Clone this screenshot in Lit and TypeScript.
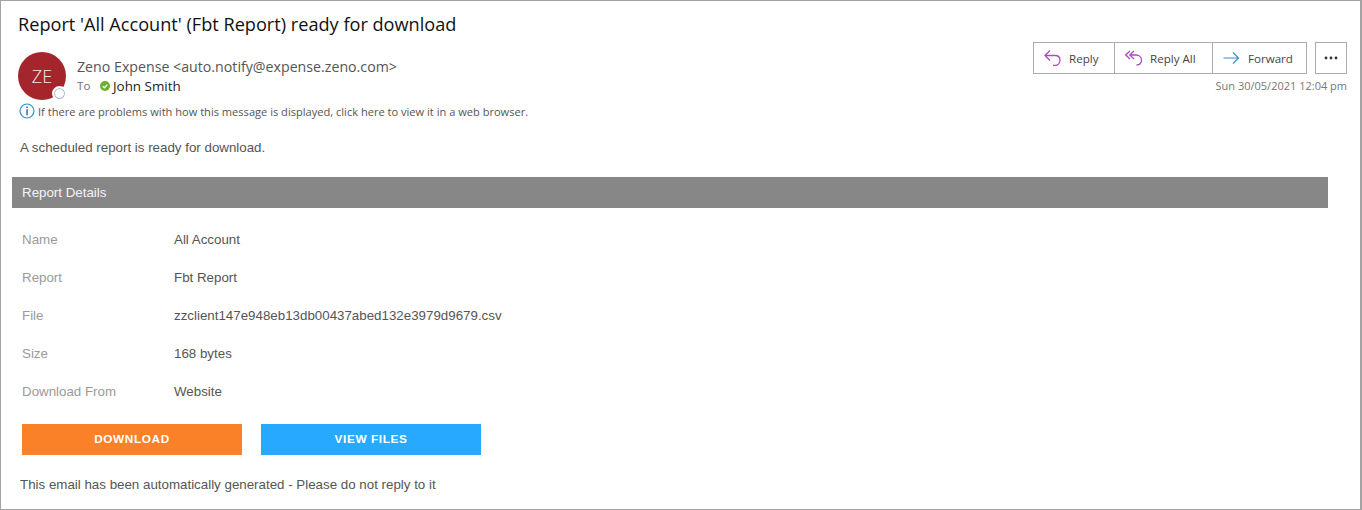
import { LitElement, html, css } from "lit";
import { customElement } from "lit/decorators.js";

const details = [
  ["Name", "All Account"],
  ["Report", "Fbt Report"],
  ["File", "zzclient147e948eb13db00437abed132e3979d9679.csv"],
  ["Size", "168 bytes"],
  ["Download From", "Website"],
];

@customElement("app-root")
class AppRoot extends LitElement {
  static styles = css`
    :host {
      display: block;
      width: 1362px;
      height: 510px;
      overflow: hidden;
      background: #fff;
    }
    .frame {
      box-sizing: border-box;
      height: 510px;
      border: 1px solid #a3a3a3;
      border-right-width: 2px;
      font-family: "Open Sans", "Noto Sans", sans-serif;
      color: #444;
      display: flex;
      flex-direction: column;
    }
    .subject {
      margin: 11px 0 0 17px;
      font-size: 18.15px;
      line-height: 24px;
      color: #111;
    }
    .head {
      display: flex;
      justify-content: space-between;
      height: 54px;
      margin-top: 16px;
      padding: 0 13px 0 17px;
    }
    .sender {
      display: flex;
      gap: 11px;
    }
    .avatar {
      position: relative;
      box-sizing: border-box;
      width: 48px;
      height: 48px;
      border-radius: 50%;
      background: #a4262c;
      color: #f5e6e6;
      font-size: 18px;
      font-weight: 300;
      line-height: 48px;
      text-align: center;
    }
    .presence {
      position: absolute;
      right: -1px;
      bottom: -1px;
      box-sizing: border-box;
      width: 15px;
      height: 15px;
      border-radius: 50%;
      background: #fff;
      border: 2px solid #fff;
      box-shadow: inset 0 0 0 1px #9fb6c6;
    }
    .from {
      font-size: 14.2px;
      line-height: 20px;
      margin-top: 5px;
      color: #555;
    }
    .to {
      display: flex;
      align-items: center;
      font-size: 13.4px;
      line-height: 18px;
      color: #222;
    }
    .to .label {
      color: #6f6f6f;
      font-size: 11.6px;
      width: 23px;
    }
    .to svg {
      margin-right: 3px;
    }
    .actions {
      display: flex;
      flex-direction: column;
      align-items: flex-end;
      margin-top: -10px;
    }
    .btns {
      display: flex;
      gap: 8px;
    }
    .group {
      box-sizing: border-box;
      display: flex;
      height: 32px;
      border: 1px solid #ababab;
    }
    .group button {
      display: flex;
      align-items: center;
      box-sizing: border-box;
      height: 30px;
      border: 0;
      border-left: 1px solid #ababab;
      background: #fff;
      padding: 0 0 0 10px;
      font: 11.6px "Open Sans", "Noto Sans", sans-serif;
      color: #444;
      gap: 8px;
    }
    .group button:first-child {
      border-left: 0;
    }
    .more {
      box-sizing: border-box;
      width: 32px;
      height: 32px;
      border: 1px solid #ababab;
      background: #fff;
      padding: 0;
      display: flex;
      align-items: center;
      justify-content: center;
    }
    .date {
      margin-top: 4px;
      font-size: 11px;
      line-height: 16px;
      color: #777;
    }
    .notice {
      display: flex;
      align-items: center;
      gap: 3px;
      height: 18px;
      margin: -4px 0 0 18px;
      font-size: 11.08px;
      color: #555;
    }
    .body {
      font-family: "Liberation Sans", Arial, sans-serif;
      font-size: 13.33px;
      color: #555;
    }
    .intro {
      margin: 20px 0 0 19px;
      line-height: 16px;
    }
    .bar {
      box-sizing: border-box;
      width: 1316px;
      height: 31px;
      margin: 21px 0 0 11px;
      padding-left: 10px;
      background: #878787;
      color: #f4f4f4;
      line-height: 31px;
    }
    .rows {
      margin: 13px 0 0 21px;
    }
    .row {
      display: grid;
      grid-template-columns: 152px 1fr;
      height: 38px;
      line-height: 38px;
    }
    .row .key {
      color: #9a9a9a;
    }
    .row .val {
      color: #555;
    }
    .cta {
      display: flex;
      gap: 19px;
      margin: 13px 0 0 21px;
    }
    .cta a {
      width: 220px;
      height: 31px;
      line-height: 30px;
      text-align: center;
      color: #fff;
      font-weight: 700;
      letter-spacing: 0.6px;
      font-size: 11.8px;
    }
    .cta .dl {
      background: #fb8128;
    }
    .cta .vf {
      background: #26a9ff;
    }
    .foot {
      margin: 22px 0 0 19px;
      line-height: 16px;
    }
  `;

  render() {
    return html`
      <div class="frame">
        <div class="subject">Report 'All Account' (Fbt Report) ready for download</div>
        <div class="head">
          <div class="sender">
            <div class="avatar">ZE<span class="presence"></span></div>
            <div>
              <div class="from">Zeno Expense &lt;auto.notify@expense.zeno.com&gt;</div>
              <div class="to">
                <span class="label">To</span>
                <svg width="10" height="10" viewBox="0 0 10 10">
                  <circle cx="5" cy="5" r="5" fill="#6bb12a" />
                  <path d="M2.6 5.1 4.4 6.8 7.4 3.6" fill="none" stroke="#fff" stroke-width="1.3" />
                </svg>
                John Smith
              </div>
            </div>
          </div>
          <div class="actions">
            <div class="btns">
              <div class="group">
                <button style="width:80px;gap:7px">
                  <svg width="18" height="16" viewBox="0 0 18 16" fill="none" stroke="#a94fb8" stroke-width="1.3">
                    <path d="M6 .5 1 5.500 6 10.500M1 5.500H11c3 0 5 2 5 4.750S14 15.500 11.500 15.500H9" />
                  </svg>
                  Reply
                </button>
                <button style="width:98px;gap:7px">
                  <svg width="18" height="16" viewBox="0 0 18 16" fill="none" stroke="#a94fb8" stroke-width="1.3">
                    <path d="M5 1 .8 5 5 9M9 1 4.800 5 9 9M4.800 5H11c3 0 5.500 2 5.500 5s-2 5-5 5" />
                  </svg>
                  Reply All
                </button>
                <button style="width:94px">
                  <svg width="17" height="14" viewBox="0 0 17 14" fill="none" stroke="#3a8fc4" stroke-width="1.2">
                    <path d="M.5 7H15.500M10 1.500 15.500 7 10 12.500" />
                  </svg>
                  Forward
                </button>
              </div>
              <button class="more" aria-label="More">
                <svg width="14" height="4" viewBox="0 0 14 4" fill="#333">
                  <circle cx="2" cy="2" r="1.400" />
                  <circle cx="7" cy="2" r="1.400" />
                  <circle cx="12" cy="2" r="1.400" />
                </svg>
              </button>
            </div>
            <div class="date">Sun 30/05/2021 12:04 pm</div>
          </div>
        </div>
        <div class="notice">
          <svg width="16" height="16" viewBox="0 0 16 16">
            <circle cx="8" cy="8" r="7" fill="#fff" stroke="#2b8fd0" stroke-width="1.200" />
            <rect x="7.300" y="3.500" width="1.500" height="1.600" fill="#2b6f9f" />
            <rect x="7.300" y="6.300" width="1.500" height="6" fill="#2b6f9f" />
          </svg>
          If there are problems with how this message is displayed, click here to view it in a web browser.
        </div>
        <div class="body">
          <div class="intro">A scheduled report is ready for download.</div>
          <div class="bar">Report Details</div>
          <div class="rows">
            ${details.map(
              ([k, v]) => html`<div class="row"><span class="key">${k}</span><span class="val">${v}</span></div>`
            )}
          </div>
          <div class="cta">
            <a class="dl">DOWNLOAD</a>
            <a class="vf">VIEW FILES</a>
          </div>
          <div class="foot">This email has been automatically generated - Please do not reply to it</div>
        </div>
      </div>
    `;
  }
}

export { AppRoot };
